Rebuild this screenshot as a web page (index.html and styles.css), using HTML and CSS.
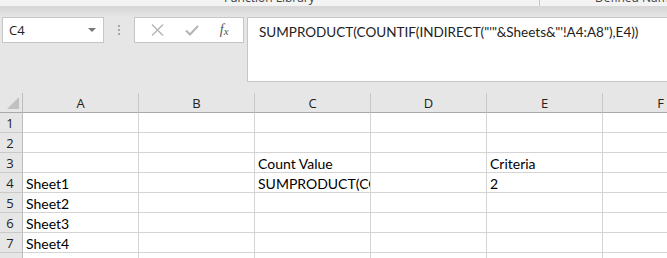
FILE: index.html
```html
<!DOCTYPE html>
<html lang="en">
<head>
  <meta charset="UTF-8" />
  <title>Sheet</title>
  <link rel="stylesheet" href="styles.css">
</head>
<body>

  <!-- Ribbon edge -->
  <div class="ribbon">
    <div class="group first"><span class="group-label">Function Library</span></div>
    <div class="group second"><span class="group-label">Defined Names</span></div>
  </div>
  <div class="ribbon-shadow"></div>

  <!-- Name box + formula bar -->
  <div class="formula-row">
    <div class="name-box">
      <span>C4</span>
      <span class="drop"></span>
    </div>
    <div class="grip"><i></i><i></i><i></i></div>
    <div class="func-box">
      <svg width="13" height="12" viewBox="0 0 13 12"><path d="M1 0.5 L12 11.5 M12 0.5 L1 11.5" stroke="#b4b4b4" stroke-width="1.4" fill="none"/></svg>
      <svg width="14" height="11" viewBox="0 0 14 11"><path d="M1 5.5 L5 9.5 L13 1" stroke="#b4b4b4" stroke-width="2" fill="none"/></svg>
      <span class="fx">f<sub>x</sub></span>
    </div>
    <div class="formula-bar">SUMPRODUCT(COUNTIF(INDIRECT("'"&amp;Sheets&amp;"'!A4:A8"),E4))</div>
  </div>

  <!-- Sheet grid -->
  <div class="sheet">
    <div class="corner"><span class="tri"></span></div>
    <div class="col-head">A</div>
    <div class="col-head">B</div>
    <div class="col-head">C</div>
    <div class="col-head">D</div>
    <div class="col-head">E</div>
    <div class="col-head">F</div>

    <div class="row-head">1</div>
    <div class="cell"></div><div class="cell"></div><div class="cell"></div><div class="cell"></div><div class="cell"></div><div class="cell"></div>

    <div class="row-head">2</div>
    <div class="cell"></div><div class="cell"></div><div class="cell"></div><div class="cell"></div><div class="cell"></div><div class="cell"></div>

    <div class="row-head">3</div>
    <div class="cell"></div><div class="cell"></div><div class="cell">Count Value</div><div class="cell"></div><div class="cell">Criteria</div><div class="cell"></div>

    <div class="row-head">4</div>
    <div class="cell">Sheet1</div><div class="cell"></div><div class="cell">SUMPRODUCT(COUNTIF(INDIRECT("'"&amp;Sheets&amp;"'!A4:A8"),E4))</div><div class="cell"></div><div class="cell">2</div><div class="cell"></div>

    <div class="row-head">5</div>
    <div class="cell">Sheet2</div><div class="cell"></div><div class="cell"></div><div class="cell"></div><div class="cell"></div><div class="cell"></div>

    <div class="row-head">6</div>
    <div class="cell">Sheet3</div><div class="cell"></div><div class="cell"></div><div class="cell"></div><div class="cell"></div><div class="cell"></div>

    <div class="row-head">7</div>
    <div class="cell">Sheet4</div><div class="cell"></div><div class="cell"></div><div class="cell"></div><div class="cell"></div><div class="cell"></div>

    <div class="row-head">8</div>
    <div class="cell"></div><div class="cell"></div><div class="cell"></div><div class="cell"></div><div class="cell"></div><div class="cell"></div>
  </div>

</body>
</html>
```

FILE: styles.css
```css
body {
  margin: 0;
  width: 667px;
  height: 258px;
  overflow: hidden;
  background-color: #e6e6e6;
  font-family: "Lato", "Open Sans", sans-serif;
  color: #000;
}

/* Ribbon edge */
.ribbon {
  height: 6px;
  background-color: #f3f3f3;
  display: flex;
  overflow: hidden;
  border-bottom: 1px solid #d8d8d8;
}

.group {
  flex-shrink: 0;
  box-sizing: border-box;
  white-space: nowrap;
}

.group.first {
  width: 540px;
  padding-left: 224px;
  border-right: 1px solid #c8c8c8;
}

.group.second {
  padding-left: 55px;
}

.group-label {
  display: block;
  font-family: "Open Sans", sans-serif;
  font-size: 12px;
  line-height: 12px;
  margin-top: -8px;
  color: #444;
}

.ribbon-shadow {
  height: 10px;
  background: linear-gradient(#d6d6d6, #e6e6e6);
}

/* Formula row */
.formula-row {
  display: flex;
  align-items: flex-start;
  padding-left: 2px;
  height: 76px;
}

.name-box {
  width: 102px;
  height: 26px;
  box-sizing: border-box;
  background-color: #fff;
  border: 1px solid #c6c6c6;
  display: flex;
  align-items: center;
  justify-content: space-between;
  padding: 0 6px;
  font-family: "Open Sans", sans-serif;
  font-size: 13px;
  color: #222;
}

.name-box .drop {
  width: 0;
  height: 0;
  border-left: 4px solid transparent;
  border-right: 4px solid transparent;
  border-top: 4px solid #777;
  margin-right: 1px;
}

.grip {
  width: 30px;
  height: 26px;
  display: flex;
  flex-direction: column;
  align-items: center;
  justify-content: center;
  gap: 2px;
}

.grip i {
  width: 2px;
  height: 2px;
  background-color: #a8a8a8;
}

.func-box {
  width: 110px;
  height: 26px;
  box-sizing: border-box;
  background-color: #fff;
  border: 1px solid #c6c6c6;
  display: flex;
  align-items: center;
  justify-content: space-around;
  padding: 0 4px 0 6px;
}

.fx {
  font-family: "Liberation Serif", serif;
  font-style: italic;
  font-size: 14px;
  color: #555;
}

.fx sub {
  font-size: 11px;
  vertical-align: -1px;
}

.formula-bar {
  flex-grow: 1;
  margin-left: 3px;
  height: 65px;
  box-sizing: border-box;
  background-color: #fff;
  border: 1px solid #c6c6c6;
  border-right: none;
  padding: 5px 0 0 11px;
  font-size: 13.5px;
  line-height: 18px;
  color: #222;
  white-space: nowrap;
}

/* Sheet grid */
.sheet {
  display: grid;
  grid-template-columns: 23px repeat(6, 116px);
  grid-auto-rows: 20px;
  background-color: #fff;
  font-size: 14px;
}

.corner,
.col-head,
.row-head {
  background-color: #e6e6e6;
  box-sizing: border-box;
  color: #222;
  font-family: "Open Sans", sans-serif;
  font-size: 13px;
}

.corner {
  border-right: 1px solid #bdbdbd;
  border-bottom: 1px solid #a9a9a9;
  display: flex;
  align-items: flex-end;
  justify-content: flex-end;
  padding: 0 3px 3px 0;
}

.tri {
  width: 0;
  height: 0;
  border-left: 12px solid transparent;
  border-bottom: 12px solid #c1c1c1;
}

.col-head {
  border-right: 1px solid #c9c9c9;
  border-bottom: 1px solid #a9a9a9;
  text-align: center;
  line-height: 20px;
}

.row-head {
  border-right: 1px solid #bdbdbd;
  border-bottom: 1px solid #c9c9c9;
  text-align: center;
  line-height: 20px;
  padding-right: 2px;
}

.cell {
  box-sizing: border-box;
  border-right: 1px solid #d4d4d4;
  border-bottom: 1px solid #d4d4d4;
  padding: 0 0 0 3px;
  line-height: 21px;
  white-space: nowrap;
  overflow: hidden;
}
```
